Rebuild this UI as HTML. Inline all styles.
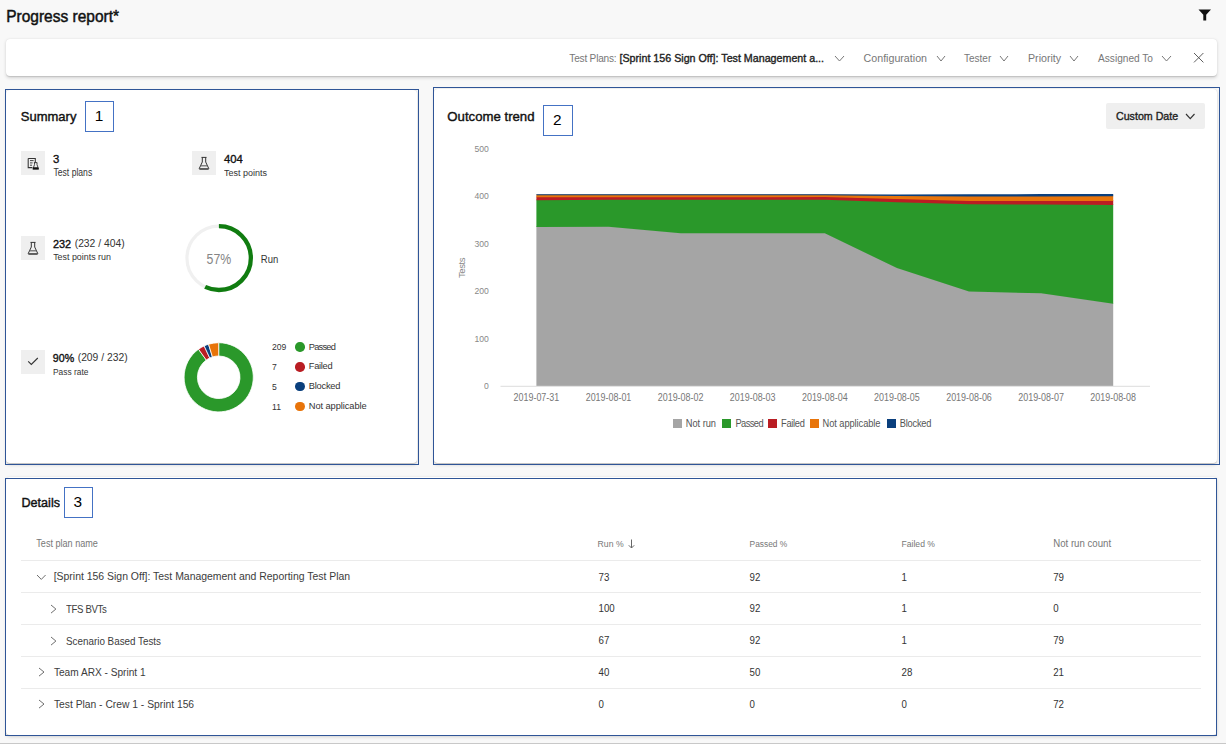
<!DOCTYPE html>
<html><head><meta charset="utf-8">
<style>
*{margin:0;padding:0;box-sizing:border-box}
html,body{width:1226px;height:744px;overflow:hidden;background:#f8f8f8;font-family:"Liberation Sans",sans-serif;color:#222;position:relative}
.a{position:absolute;white-space:nowrap;line-height:1}
.card{position:absolute;background:#fff;border-radius:4px;box-shadow:0 1.6px 3.6px rgba(0,0,0,.15),0 0.3px 0.9px rgba(0,0,0,.11)}
.blue{position:absolute;border:1.3px solid #2f5597}
.num{position:absolute;border:1px solid #4472c4;background:#fff}
.ib{position:absolute;width:24px;height:24px;background:#efefef}
</style></head><body>
<div class="a" style="top:9.18px;font-size:15.5px;color:#111;-webkit-text-stroke:0.45px #111;transform:scaleY(1.02);transform-origin:0 13.12px;left:6.20px;">Progress report*</div>
<svg class="a" style="left:1197.6px;top:9px" width="14" height="12" viewBox="0 0 14 12"><path d="M0.5 0.5 H13 L8.2 5.8 V11.5 H5.3 V5.8 Z" fill="#111"/></svg>
<div class="card" style="left:6px;top:39px;width:1211px;height:37px;"></div>
<div class="a" style="top:53.95px;font-size:10.1px;color:#777;letter-spacing:-0.2px;transform:scaleY(1.05);transform-origin:0 8.55px;left:569.30px;">Test Plans:</div>
<div class="a" style="top:53.44px;font-size:10.7px;color:#222;-webkit-text-stroke:0.35px #222;transform:scaleY(1.04);transform-origin:0 9.06px;left:619.50px;">[Sprint 156 Sign Off]: Test Management a...</div>
<svg class="a" style="left:833.5px;top:55px" width="11" height="7"><path d="M1 1 L5.5 6 L10 1" fill="none" stroke="#777" stroke-width="1.0"/></svg>
<div class="a" style="top:53.48px;font-size:10.66px;color:#777;left:863.60px;">Configuration</div>
<svg class="a" style="left:935.6px;top:55px" width="10" height="7"><path d="M1 1 L5.0 6 L9 1" fill="none" stroke="#777" stroke-width="1.0"/></svg>
<div class="a" style="top:54.03px;font-size:10.0px;color:#777;left:964.00px;">Tester</div>
<svg class="a" style="left:999px;top:55px" width="10" height="7"><path d="M1 1 L5.0 6 L9 1" fill="none" stroke="#777" stroke-width="1.0"/></svg>
<div class="a" style="top:53.47px;font-size:10.67px;color:#777;left:1028.00px;">Priority</div>
<svg class="a" style="left:1068.5px;top:55px" width="10" height="7"><path d="M1 1 L5.0 6 L9 1" fill="none" stroke="#777" stroke-width="1.0"/></svg>
<div class="a" style="top:53.91px;font-size:10.15px;color:#777;left:1098.00px;">Assigned To</div>
<svg class="a" style="left:1160.7px;top:55px" width="11" height="7"><path d="M1 1 L5.5 6 L10 1" fill="none" stroke="#777" stroke-width="1.0"/></svg>
<svg class="a" style="left:1193px;top:52px" width="12" height="12"><path d="M1 1 L10.4 10.4 M10.4 1 L1 10.4" stroke="#555" stroke-width="0.95"/></svg>
<div class="card" style="left:6px;top:90px;width:411px;height:373px"></div>
<div class="card" style="left:434px;top:89px;width:783px;height:374px"></div>
<div class="card" style="left:6px;top:477px;width:1211px;height:258px"></div>
<div class="a" style="top:110.00px;font-size:13.0px;color:#111;-webkit-text-stroke:0.4px #111;left:20.80px;">Summary</div>
<div class="ib" style="left:21px;top:151px"></div>
<div class="ib" style="left:192px;top:151px"></div>
<div class="ib" style="left:21px;top:236px"></div>
<div class="ib" style="left:21px;top:350px"></div>
<svg class="a" style="left:21px;top:151px" width="24" height="24" viewBox="0 0 24 24"><path d="M7.2 7.5 H14.3 V11.5 M7.2 7.5 V16.6 H11.5" fill="none" stroke="#333" stroke-width="1.05"/><path d="M9 9.6 H12.6 M9 11.9 H11.6 M9 14.2 H11" stroke="#444" stroke-width="1"/><path d="M12.9 11.6 H16.1 M13.5 11.6 V13.6 L11.9 18.2 H17.6 L16 13.6 V11.6" fill="none" stroke="#333" stroke-width="0.9"/><path d="M12.3 16.3 H17.2 L17.7 18.2 H11.8 Z" fill="#111"/></svg>
<svg class="a" style="left:192px;top:151px" width="24" height="24" viewBox="0 0 24 24"><path d="M9.5 6.4 H14.5" stroke="#333" stroke-width="1"/><path d="M10.3 6.4 V11 L7.3 17.4 Q7 18.2 7.9 18.2 H16.1 Q17 18.2 16.7 17.4 L13.7 11 V6.4" fill="none" stroke="#333" stroke-width="1"/><path d="M8.4 14.8 H15.6" stroke="#666" stroke-width="1.2"/><path d="M7.5 17.7 H16.5" stroke="#555" stroke-width="1.2"/></svg>
<svg class="a" style="left:21px;top:236px" width="24" height="24" viewBox="0 0 24 24"><path d="M9.5 6.4 H14.5" stroke="#333" stroke-width="1"/><path d="M10.3 6.4 V11 L7.3 17.4 Q7 18.2 7.9 18.2 H16.1 Q17 18.2 16.7 17.4 L13.7 11 V6.4" fill="none" stroke="#333" stroke-width="1"/><path d="M8.4 14.8 H15.6" stroke="#666" stroke-width="1.2"/><path d="M7.5 17.7 H16.5" stroke="#555" stroke-width="1.2"/></svg>
<svg class="a" style="left:21px;top:350px" width="24" height="24" viewBox="0 0 24 24"><path d="M7.2 11.4 L10.3 14.5 L16.8 8" fill="none" stroke="#333" stroke-width="1.1"/></svg>
<div class="a" style="top:153.63px;font-size:11.3px;color:#111;-webkit-text-stroke:0.35px #111;transform:scaleY(1.03);transform-origin:0 9.57px;left:53.00px;">3</div>
<div class="a" style="top:169.12px;font-size:8.6px;color:#333;transform:scaleY(1.17);transform-origin:0 7.28px;left:53.50px;">Test plans</div>
<div class="a" style="top:153.96px;font-size:11.27px;color:#111;-webkit-text-stroke:0.35px #111;transform:scaleY(1.03);transform-origin:0 9.54px;left:224.00px;">404</div>
<div class="a" style="top:168.68px;font-size:9.0px;color:#333;transform:scaleY(1.1);transform-origin:0 7.62px;left:224.00px;">Test points</div>
<div class="a" style="top:238.57px;font-size:10.9px;color:#111;-webkit-text-stroke:0.35px #111;transform:scaleY(1.08);transform-origin:0 9.23px;left:52.90px;">232</div>
<div class="a" style="top:239.05px;font-size:10.34px;color:#333;transform:scaleY(1.08);transform-origin:0 8.75px;left:74.70px;">(232 / 404)</div>
<div class="a" style="top:253.07px;font-size:8.89px;color:#333;transform:scaleY(1.1);transform-origin:0 7.53px;left:53.20px;">Test points run</div>
<div class="a" style="top:352.68px;font-size:10.65px;color:#111;-webkit-text-stroke:0.35px #111;transform:scaleY(1.06);transform-origin:0 9.02px;left:52.80px;">90%</div>
<div class="a" style="top:352.95px;font-size:10.34px;color:#333;transform:scaleY(1.08);transform-origin:0 8.75px;left:77.70px;">(209 / 232)</div>
<div class="a" style="top:367.59px;font-size:8.4px;color:#333;transform:scaleY(1.15);transform-origin:0 7.11px;left:53.00px;">Pass rate</div>
<svg class="a" style="left:0;top:0" width="420" height="470"><circle cx="218.9" cy="258.05" r="31.95" fill="none" stroke="#f0f0f0" stroke-width="3.2"/><circle cx="218.9" cy="258.05" r="31.95" fill="none" stroke="#107c10" stroke-width="4.3" stroke-dasharray="114.43 200.74777056438776" transform="rotate(-90 218.9 258.05)"/></svg>
<div class="a" style="top:254.09px;font-size:12.3px;color:#858585;transform:scaleY(1.14);transform-origin:50% 10.41px;left:18.90px;width:400px;text-align:center;">57%</div>
<div class="a" style="top:254.76px;font-size:9.5px;color:#333;transform:scaleY(1.1);transform-origin:0 8.04px;left:260.80px;">Run</div>
<svg class="a" style="left:0;top:0" width="420" height="470"><path d="M218.70 342.70 A34.6 34.6 0 1 1 198.51 349.20 L206.27 360.00 A21.3 21.3 0 1 0 218.70 356.00 Z" fill="#2a982a" stroke="#fff" stroke-width="0.8"/><path d="M198.51 349.20 A34.6 34.6 0 0 1 204.17 345.90 L209.76 357.97 A21.3 21.3 0 0 0 206.27 360.00 Z" fill="#b91d23" stroke="#fff" stroke-width="0.8"/><path d="M204.17 345.90 A34.6 34.6 0 0 1 208.54 344.22 L212.45 356.94 A21.3 21.3 0 0 0 209.76 357.97 Z" fill="#0a3f7d" stroke="#fff" stroke-width="0.8"/><path d="M208.54 344.22 A34.6 34.6 0 0 1 218.70 342.70 L218.70 356.00 A21.3 21.3 0 0 0 212.45 356.94 Z" fill="#e8740a" stroke="#fff" stroke-width="0.8"/></svg>
<div class="a" style="top:343.42px;font-size:8.6px;color:#333;transform:scaleY(1.08);transform-origin:0 7.28px;left:272.00px;">209</div>
<div class="a" style="left:295.4px;top:342.40px;width:9.4px;height:9.4px;border-radius:50%;background:#2a982a"></div>
<div class="a" style="top:342.73px;font-size:9.3px;color:#333;letter-spacing:-0.8px;transform:scaleY(1.05);transform-origin:0 7.87px;left:308.80px;">Passed</div>
<div class="a" style="top:363.15px;font-size:8.6px;color:#333;transform:scaleY(1.08);transform-origin:0 7.28px;left:272.00px;">7</div>
<div class="a" style="left:295.4px;top:362.13px;width:9.4px;height:9.4px;border-radius:50%;background:#b91d23"></div>
<div class="a" style="top:362.46px;font-size:9.3px;color:#333;letter-spacing:-0.3px;transform:scaleY(1.05);transform-origin:0 7.87px;left:308.80px;">Failed</div>
<div class="a" style="top:382.88px;font-size:8.6px;color:#333;transform:scaleY(1.08);transform-origin:0 7.28px;left:272.00px;">5</div>
<div class="a" style="left:295.4px;top:381.86px;width:9.4px;height:9.4px;border-radius:50%;background:#0a3f7d"></div>
<div class="a" style="top:382.19px;font-size:9.3px;color:#333;letter-spacing:-0.25px;transform:scaleY(1.05);transform-origin:0 7.87px;left:308.80px;">Blocked</div>
<div class="a" style="top:402.61px;font-size:8.6px;color:#333;transform:scaleY(1.08);transform-origin:0 7.28px;left:272.00px;">11</div>
<div class="a" style="left:295.4px;top:401.59px;width:9.4px;height:9.4px;border-radius:50%;background:#e8740a"></div>
<div class="a" style="top:401.92px;font-size:9.3px;color:#333;letter-spacing:-0.08px;transform:scaleY(1.05);transform-origin:0 7.87px;left:308.80px;">Not applicable</div>
<div class="a" style="top:109.63px;font-size:13.2px;color:#111;-webkit-text-stroke:0.4px #111;left:447.30px;">Outcome trend</div>
<div class="a" style="left:1106px;top:103px;width:99px;height:26px;background:#efefef;border-radius:2px"></div>
<div class="a" style="top:110.58px;font-size:10.66px;color:#222;-webkit-text-stroke:0.35px #222;left:1116.00px;">Custom Date</div>
<svg class="a" style="left:1185.3px;top:113.3px" width="10.5" height="6.6"><path d="M1 1 L5.25 5.6 L9.5 1" fill="none" stroke="#333" stroke-width="1.15"/></svg>
<div class="a" style="top:382.32px;font-size:8.6px;color:#888;transform:scaleY(1.08);transform-origin:100% 7.28px;right:737.20px;">0</div>
<div class="a" style="top:334.82px;font-size:8.6px;color:#888;transform:scaleY(1.08);transform-origin:100% 7.28px;right:737.20px;">100</div>
<div class="a" style="top:287.32px;font-size:8.6px;color:#888;transform:scaleY(1.08);transform-origin:100% 7.28px;right:737.20px;">200</div>
<div class="a" style="top:239.82px;font-size:8.6px;color:#888;transform:scaleY(1.08);transform-origin:100% 7.28px;right:737.20px;">300</div>
<div class="a" style="top:192.32px;font-size:8.6px;color:#888;transform:scaleY(1.08);transform-origin:100% 7.28px;right:737.20px;">400</div>
<div class="a" style="top:144.82px;font-size:8.6px;color:#888;transform:scaleY(1.08);transform-origin:100% 7.28px;right:737.20px;">500</div>
<div class="a" style="top:-0.85px;font-size:1px;color:#222;left:0.00px;"></div>
<div class="a" style="left:462.2px;top:268.1px;font-size:9.6px;letter-spacing:-0.5px;color:#888;transform:translate(-50%,-50%) rotate(-90deg);transform-origin:center">Tests</div>
<svg class="a" style="left:0;top:0" width="1226" height="470"><polygon points="536.40,226.10 608.50,226.00 680.60,232.50 752.70,232.50 824.80,232.50 896.90,267.20 969.00,290.80 1041.10,292.40 1113.20,303.00 1113.20,386.0 536.40,386.0" fill="#a5a5a5"/><polygon points="536.40,199.40 608.50,199.00 680.60,199.00 752.70,199.00 824.80,198.90 896.90,201.40 969.00,203.40 1041.10,203.80 1113.20,204.20 1113.20,303.80 1041.10,293.20 969.00,291.60 896.90,268.00 824.80,233.30 752.70,233.30 680.60,233.30 608.50,226.80 536.40,226.90" fill="#2a982a"/><polygon points="536.40,196.40 608.50,196.40 680.60,196.40 752.70,196.40 824.80,196.30 896.90,198.20 969.00,200.10 1041.10,200.20 1113.20,200.30 1113.20,205.00 1041.10,204.60 969.00,204.20 896.90,202.20 824.80,199.70 752.70,199.80 680.60,199.80 608.50,199.80 536.40,200.20" fill="#b91d23"/><polygon points="536.40,194.50 608.50,194.50 680.60,194.50 752.70,194.50 824.80,194.50 896.90,195.30 969.00,195.70 1041.10,195.60 1113.20,195.50 1113.20,201.10 1041.10,201.00 969.00,200.90 896.90,199.00 824.80,197.10 752.70,197.20 680.60,197.20 608.50,197.20 536.40,197.20" fill="#e8740a"/><polygon points="536.40,194.30 608.50,194.30 680.60,194.30 752.70,194.30 824.80,194.20 896.90,194.60 969.00,194.20 1041.10,194.10 1113.20,194.10 1113.20,196.30 1041.10,196.40 969.00,196.50 896.90,196.10 824.80,195.30 752.70,195.30 680.60,195.30 608.50,195.30 536.40,195.30" fill="#0a3f7d"/><line x1="500.5" y1="386.3" x2="1150" y2="386.3" stroke="#ddd" stroke-width="1"/></svg>
<div class="a" style="top:393.64px;font-size:8.93px;color:#777;transform:scaleY(1.12);transform-origin:50% 7.56px;left:336.40px;width:400px;text-align:center;">2019-07-31</div>
<div class="a" style="top:393.64px;font-size:8.93px;color:#777;transform:scaleY(1.12);transform-origin:50% 7.56px;left:408.50px;width:400px;text-align:center;">2019-08-01</div>
<div class="a" style="top:393.64px;font-size:8.93px;color:#777;transform:scaleY(1.12);transform-origin:50% 7.56px;left:480.60px;width:400px;text-align:center;">2019-08-02</div>
<div class="a" style="top:393.64px;font-size:8.93px;color:#777;transform:scaleY(1.12);transform-origin:50% 7.56px;left:552.70px;width:400px;text-align:center;">2019-08-03</div>
<div class="a" style="top:393.64px;font-size:8.93px;color:#777;transform:scaleY(1.12);transform-origin:50% 7.56px;left:624.80px;width:400px;text-align:center;">2019-08-04</div>
<div class="a" style="top:393.64px;font-size:8.93px;color:#777;transform:scaleY(1.12);transform-origin:50% 7.56px;left:696.90px;width:400px;text-align:center;">2019-08-05</div>
<div class="a" style="top:393.64px;font-size:8.93px;color:#777;transform:scaleY(1.12);transform-origin:50% 7.56px;left:769.00px;width:400px;text-align:center;">2019-08-06</div>
<div class="a" style="top:393.64px;font-size:8.93px;color:#777;transform:scaleY(1.12);transform-origin:50% 7.56px;left:841.10px;width:400px;text-align:center;">2019-08-07</div>
<div class="a" style="top:393.64px;font-size:8.93px;color:#777;transform:scaleY(1.12);transform-origin:50% 7.56px;left:913.20px;width:400px;text-align:center;">2019-08-08</div>
<div class="a" style="left:672.6px;top:419px;width:9px;height:9px;background:#a5a5a5"></div>
<div class="a" style="top:419.73px;font-size:9.3px;color:#555;letter-spacing:-0.041px;transform:scaleY(1.08);transform-origin:0 7.87px;left:685.80px;">Not run</div>
<div class="a" style="left:722px;top:419px;width:9px;height:9px;background:#2a982a"></div>
<div class="a" style="top:419.73px;font-size:9.3px;color:#555;letter-spacing:-0.55px;transform:scaleY(1.08);transform-origin:0 7.87px;left:735.40px;">Passed</div>
<div class="a" style="left:768px;top:419px;width:9px;height:9px;background:#b91d23"></div>
<div class="a" style="top:419.73px;font-size:9.3px;color:#555;letter-spacing:-0.3px;transform:scaleY(1.08);transform-origin:0 7.87px;left:781.00px;">Failed</div>
<div class="a" style="left:809.6px;top:419px;width:9px;height:9px;background:#e8740a"></div>
<div class="a" style="top:419.73px;font-size:9.3px;color:#555;letter-spacing:-0.08px;transform:scaleY(1.08);transform-origin:0 7.87px;left:822.60px;">Not applicable</div>
<div class="a" style="left:887.2px;top:419px;width:9px;height:9px;background:#0a3f7d"></div>
<div class="a" style="top:419.73px;font-size:9.3px;color:#555;letter-spacing:-0.25px;transform:scaleY(1.08);transform-origin:0 7.87px;left:899.80px;">Blocked</div>
<div class="a" style="top:496.93px;font-size:12.6px;color:#111;-webkit-text-stroke:0.4px #111;transform:scaleY(1.05);transform-origin:0 10.67px;left:21.50px;">Details</div>
<div class="a" style="top:539.71px;font-size:9.08px;color:#777;transform:scaleY(1.1);transform-origin:0 7.69px;left:36.30px;">Test plan name</div>
<div class="a" style="top:540.07px;font-size:8.66px;color:#777;transform:scaleY(1.1);transform-origin:0 7.33px;left:597.60px;">Run %</div>
<div class="a" style="top:540.29px;font-size:8.4px;color:#777;transform:scaleY(1.1);transform-origin:0 7.11px;left:749.60px;">Passed %</div>
<div class="a" style="top:540.12px;font-size:8.6px;color:#777;transform:scaleY(1.1);transform-origin:0 7.28px;left:901.50px;">Failed %</div>
<div class="a" style="top:539.22px;font-size:9.66px;color:#777;transform:scaleY(1.1);transform-origin:0 8.18px;left:1053.20px;">Not run count</div>
<svg class="a" style="left:628px;top:538.5px" width="7" height="10"><path d="M3.5 0.5 V9 M0.8 6.3 L3.5 9 L6.2 6.3" fill="none" stroke="#666" stroke-width="1"/></svg>
<div class="a" style="left:21px;top:560.0px;width:1180px;height:1px;background:#ebebeb"></div>
<div class="a" style="left:21px;top:592.1px;width:1180px;height:1px;background:#ebebeb"></div>
<div class="a" style="left:21px;top:624.1px;width:1180px;height:1px;background:#ebebeb"></div>
<div class="a" style="left:21px;top:655.9px;width:1180px;height:1px;background:#ebebeb"></div>
<div class="a" style="left:21px;top:687.8px;width:1180px;height:1px;background:#ebebeb"></div>
<div class="a" style="top:572.45px;font-size:10.45px;color:#3c3c3c;transform:scaleY(1.05);transform-origin:0 8.85px;left:53.70px;">[Sprint 156 Sign Off]: Test Management and Reporting Test Plan</div>
<svg class="a" style="left:36px;top:573.5px" width="10.6" height="6.4"><path d="M1 1 L5.3 5.4 L9.6 1" fill="none" stroke="#666" stroke-width="0.95"/></svg>
<div class="a" style="top:572.59px;font-size:9.7px;color:#333;transform:scaleY(1.12);transform-origin:0 8.21px;left:598.50px;">73</div>
<div class="a" style="top:572.59px;font-size:9.7px;color:#333;transform:scaleY(1.12);transform-origin:0 8.21px;left:749.60px;">92</div>
<div class="a" style="top:572.59px;font-size:9.7px;color:#333;transform:scaleY(1.12);transform-origin:0 8.21px;left:901.50px;">1</div>
<div class="a" style="top:572.59px;font-size:9.7px;color:#333;transform:scaleY(1.12);transform-origin:0 8.21px;left:1053.20px;">79</div>
<div class="a" style="top:605.02px;font-size:9.6px;color:#3c3c3c;letter-spacing:-0.35px;transform:scaleY(1.05);transform-origin:0 8.13px;left:66.00px;">TFS BVTs</div>
<svg class="a" style="left:50.2px;top:603.85px" width="6.9" height="10.1"><path d="M1 1 L5.9 5.05 L1 9.1" fill="none" stroke="#666" stroke-width="0.95"/></svg>
<div class="a" style="top:604.44px;font-size:9.7px;color:#333;transform:scaleY(1.12);transform-origin:0 8.21px;left:598.50px;">100</div>
<div class="a" style="top:604.44px;font-size:9.7px;color:#333;transform:scaleY(1.12);transform-origin:0 8.21px;left:749.60px;">92</div>
<div class="a" style="top:604.44px;font-size:9.7px;color:#333;transform:scaleY(1.12);transform-origin:0 8.21px;left:901.50px;">1</div>
<div class="a" style="top:604.44px;font-size:9.7px;color:#333;transform:scaleY(1.12);transform-origin:0 8.21px;left:1053.20px;">0</div>
<div class="a" style="top:636.65px;font-size:9.86px;color:#3c3c3c;transform:scaleY(1.05);transform-origin:0 8.35px;left:66.00px;">Scenario Based Tests</div>
<svg class="a" style="left:50.2px;top:635.7px" width="6.9" height="10.1"><path d="M1 1 L5.9 5.05 L1 9.1" fill="none" stroke="#666" stroke-width="0.95"/></svg>
<div class="a" style="top:636.29px;font-size:9.7px;color:#333;transform:scaleY(1.12);transform-origin:0 8.21px;left:598.50px;">67</div>
<div class="a" style="top:636.29px;font-size:9.7px;color:#333;transform:scaleY(1.12);transform-origin:0 8.21px;left:749.60px;">92</div>
<div class="a" style="top:636.29px;font-size:9.7px;color:#333;transform:scaleY(1.12);transform-origin:0 8.21px;left:901.50px;">1</div>
<div class="a" style="top:636.29px;font-size:9.7px;color:#333;transform:scaleY(1.12);transform-origin:0 8.21px;left:1053.20px;">79</div>
<div class="a" style="top:668.26px;font-size:10.15px;color:#3c3c3c;transform:scaleY(1.05);transform-origin:0 8.59px;left:53.90px;">Team ARX - Sprint 1</div>
<svg class="a" style="left:38.1px;top:667.3499999999999px" width="7" height="10.1"><path d="M1 1 L6 5.05 L1 9.1" fill="none" stroke="#666" stroke-width="0.95"/></svg>
<div class="a" style="top:668.14px;font-size:9.7px;color:#333;transform:scaleY(1.12);transform-origin:0 8.21px;left:598.50px;">40</div>
<div class="a" style="top:668.14px;font-size:9.7px;color:#333;transform:scaleY(1.12);transform-origin:0 8.21px;left:749.60px;">50</div>
<div class="a" style="top:668.14px;font-size:9.7px;color:#333;transform:scaleY(1.12);transform-origin:0 8.21px;left:901.50px;">28</div>
<div class="a" style="top:668.14px;font-size:9.7px;color:#333;transform:scaleY(1.12);transform-origin:0 8.21px;left:1053.20px;">21</div>
<div class="a" style="top:699.98px;font-size:10.3px;color:#3c3c3c;transform:scaleY(1.05);transform-origin:0 8.72px;left:53.90px;">Test Plan - Crew 1 - Sprint 156</div>
<svg class="a" style="left:38.1px;top:699.1999999999999px" width="7" height="10.1"><path d="M1 1 L6 5.05 L1 9.1" fill="none" stroke="#666" stroke-width="0.95"/></svg>
<div class="a" style="top:699.99px;font-size:9.7px;color:#333;transform:scaleY(1.12);transform-origin:0 8.21px;left:598.50px;">0</div>
<div class="a" style="top:699.99px;font-size:9.7px;color:#333;transform:scaleY(1.12);transform-origin:0 8.21px;left:749.60px;">0</div>
<div class="a" style="top:699.99px;font-size:9.7px;color:#333;transform:scaleY(1.12);transform-origin:0 8.21px;left:901.50px;">0</div>
<div class="a" style="top:699.99px;font-size:9.7px;color:#333;transform:scaleY(1.12);transform-origin:0 8.21px;left:1053.20px;">72</div>
<div class="blue" style="left:5px;top:89px;width:414px;height:376px"></div>
<div class="blue" style="left:433px;top:87px;width:787px;height:378px"></div>
<div class="blue" style="left:5px;top:477.5px;width:1212px;height:258.5px"></div>
<div class="num" style="left:85px;top:101.4px;width:29.0px;height:30.2px"></div>
<div class="num" style="left:543.3px;top:105.4px;width:29.6px;height:30.2px"></div>
<div class="num" style="left:64.2px;top:487.2px;width:28.6px;height:30.4px"></div>
<div class="a" style="top:108.16px;font-size:15.4px;color:#000;left:-101.00px;width:400px;text-align:center;">1</div>
<div class="a" style="top:112.16px;font-size:15.4px;color:#000;left:357.20px;width:400px;text-align:center;">2</div>
<div class="a" style="top:494.16px;font-size:15.4px;color:#000;left:-122.30px;width:400px;text-align:center;">3</div>
<div class="a" style="left:0;top:742.6px;width:1226px;height:1.4px;background:#c8c8c8"></div>
</body></html>
